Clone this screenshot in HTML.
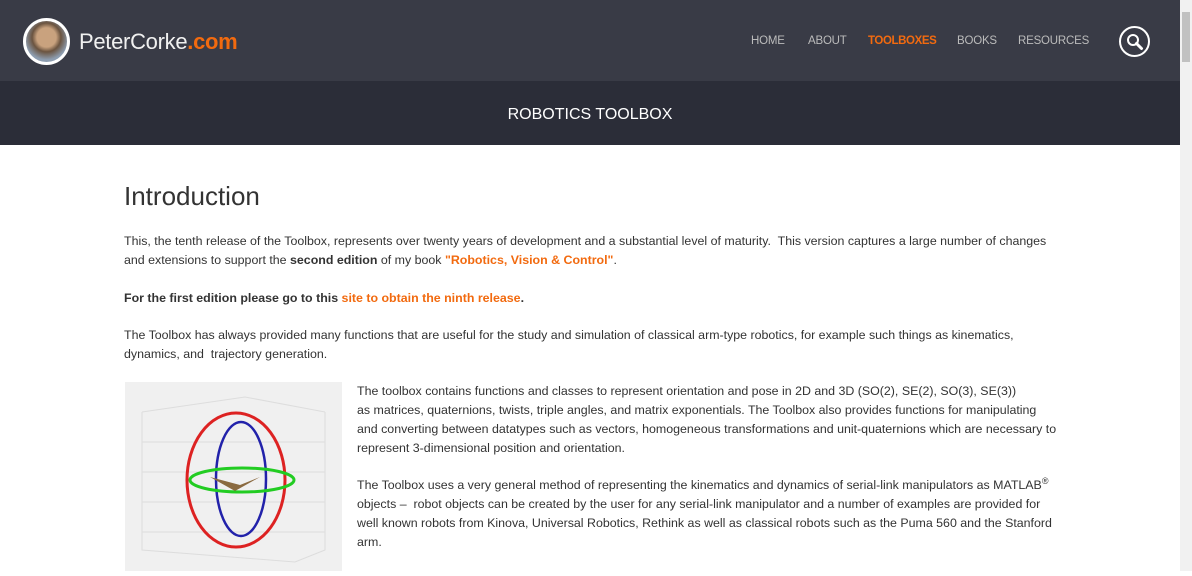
<!DOCTYPE html>
<html><head><meta charset="utf-8"><style>
body{margin:0;width:1192px;height:571px;overflow:hidden;background:#fff;font-family:"Liberation Sans",sans-serif;position:relative}
.hdr{position:absolute;left:0;top:0;width:1180px;height:81px;background:#393b46}
.band{position:absolute;left:0;top:81px;width:1180px;height:64px;background:#2b2d38;color:#fff;text-align:center;font-size:16px;line-height:68px}
.sb{position:absolute;left:1180px;top:0;width:12px;height:571px;background:#f1f1f1}
.sb div{position:absolute;left:2px;top:12px;width:8px;height:50px;background:#c1c1c1}
.av{position:absolute;left:23px;top:18px;width:41px;height:41px;border-radius:50%;border:3px solid #fff;background:radial-gradient(circle at 50% 40%,#c9a27e 0 30%,#6b5440 45%,#8d9db0 70%)}
.logo{position:absolute;left:79px;top:29px;font-size:22px;color:#f0f0f0;letter-spacing:-0.3px}
.logo b{color:#f26a0f}
.nav{position:absolute;top:35px;font-size:11.5px;color:#bbb;letter-spacing:-0.2px}
.srch{position:absolute;left:1119px;top:26px;width:27px;height:27px;border:2px solid #fff;border-radius:50%}
.c{position:absolute;left:124px;color:#333;font-size:12.4px;line-height:19px}
a{color:#f26a0f;text-decoration:none;font-weight:bold}
.img{position:absolute;left:125px;top:382px;width:217px;height:189px;background:#f0f0f0}
</style></head><body>
<div class="hdr"></div>
<div class="av"></div>
<div class="logo">PeterCorke<b>.com</b></div>
<div class="nav" style="left:751px">HOME</div>
<div class="nav" style="left:808px">ABOUT</div>
<div class="nav" style="left:868px;color:#f26a0f;font-weight:bold;letter-spacing:-0.4px">TOOLBOXES</div>
<div class="nav" style="left:957px">BOOKS</div>
<div class="nav" style="left:1018px">RESOURCES</div>
<div class="srch"><svg width="27" height="27" viewBox="0 0 27 27"><circle cx="12" cy="12" r="5" fill="none" stroke="#fff" stroke-width="2"/><path d="M15.5 15.5l5 5" stroke="#fff" stroke-width="3" stroke-linecap="round"/></svg></div>
<div class="band">ROBOTICS TOOLBOX</div>
<div class="sb"><div></div></div>
<div class="c" style="top:180px;font-size:26px;line-height:32px">Introduction</div>
<div class="c" style="top:232px;width:935px">This, the tenth release of the Toolbox, represents over twenty years of development and a substantial level of maturity.&nbsp; This version captures a large number of changes and extensions to support the <b>second edition</b> of my book <a>"Robotics, Vision &amp; Control"</a>.</div>
<div class="c" style="top:289px"><b>For the first edition please go to this <a>site to obtain the ninth release</a>.</b></div>
<div class="c" style="top:326px;width:900px">The Toolbox has always provided many functions that are useful for the study and simulation of classical arm-type robotics, for example such things as kinematics, dynamics, and&nbsp; trajectory generation.</div>
<div class="img"><svg width="217" height="189" viewBox="0 0 217 189">
<g stroke="#ddd" fill="none"><path d="M17 30L17 168L170 180L200 168L200 30M17 30L120 15L200 30"/><path d="M17 60h183M17 90h183M17 120h183M17 150h183"/></g>
<ellipse cx="111" cy="98" rx="49" ry="67" fill="none" stroke="#d22" stroke-width="3"/>
<ellipse cx="116" cy="97" rx="25" ry="57" fill="none" stroke="#22a" stroke-width="2.5"/>
<ellipse cx="117" cy="98" rx="52" ry="12" fill="none" stroke="#2c2" stroke-width="3"/>
<path d="M85 95l30 8 20-8-25 14z" fill="#8a6a40"/></svg></div>
<div class="c" style="left:357px;top:382px;width:700px">The toolbox contains functions and classes to represent orientation and pose in 2D and 3D (SO(2), SE(2), SO(3), SE(3))<br>as matrices, quaternions, twists, triple angles, and matrix exponentials. The Toolbox also provides functions for manipulating and converting between datatypes such as vectors, homogeneous transformations and unit-quaternions which are necessary to represent 3-dimensional position and orientation.</div>
<div class="c" style="left:357px;top:476px;width:695px">The Toolbox uses a very general method of representing the kinematics and dynamics of serial-link manipulators as MATLAB<sup style="font-size:9px;line-height:0">®</sup> objects –&nbsp; robot objects can be created by the user for any serial-link manipulator and a number of examples are provided for well known robots from Kinova, Universal Robotics, Rethink as well as classical robots such as the Puma 560 and the Stanford arm.</div>
</body></html>
